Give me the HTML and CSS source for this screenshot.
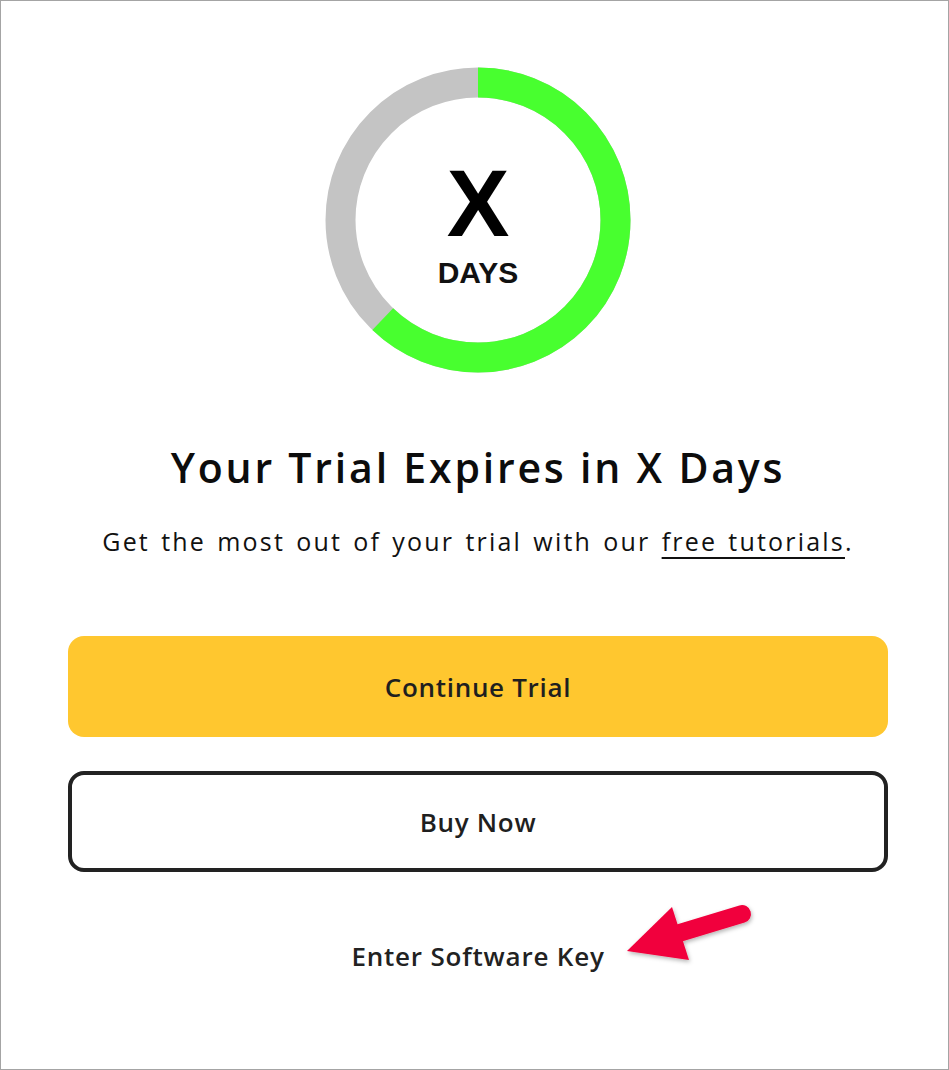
FILE: index.html
```html
<!DOCTYPE html>
<html lang="en">
<head>
<meta charset="utf-8">
<title>Trial</title>
<link rel="stylesheet" href="styles.css">
</head>
<body>
<div class="frame">
  <div class="ring">
    <svg class="ring-svg" width="306" height="306" viewBox="0 0 306 306">
      <circle cx="153" cy="153" r="137.5" fill="none" stroke="#c4c4c4" stroke-width="30"/>
      <circle cx="153" cy="153" r="137.5" fill="none" stroke="#48ff2f" stroke-width="30"
        stroke-dasharray="537 864" transform="rotate(-90 153 153)"/>
    </svg>
    <div class="ring-label">
      <div class="ring-x">X</div>
      <div class="ring-days">DAYS</div>
    </div>
  </div>
  <h1 class="title">Your Trial Expires in X Days</h1>
  <p class="sub">Get the most out of your trial with our <a class="link" href="#">free tutorials</a>.</p>
  <div class="actions">
    <button class="btn btn-primary">Continue Trial</button>
    <button class="btn btn-outline">Buy Now</button>
    <a class="key" href="#">Enter Software Key</a>
  </div>
  <svg class="arrow" width="140" height="80" viewBox="600 890 140 80">
    <defs>
      <filter id="sh" x="-20%" y="-20%" width="140%" height="150%">
        <feDropShadow dx="1" dy="2" stdDeviation="2" flood-color="#000" flood-opacity="0.3"/>
      </filter>
    </defs>
    <g filter="url(#sh)" fill="#f1003c">
      <line x1="742" y1="914" x2="676" y2="934" stroke="#f1003c" stroke-width="18" stroke-linecap="round"/>
      <polygon points="627,951 672,907 689,960"/>
    </g>
  </svg>
</div>
</body>
</html>
```
FILE: styles.css
```css
* { box-sizing: border-box; }
html, body { margin: 0; padding: 0; background: #fff; }
body { font-family: "Open Sans", "Liberation Sans", sans-serif; color: #111; }
.frame {
  position: relative;
  width: 949px;
  height: 1070px;
  border: 1px solid #a4a4a4;
  display: flex;
  flex-direction: column;
  align-items: center;
  padding-top: 66px;
  padding-left: 7px;
}
.ring { position: relative; width: 306px; height: 306px; }
.ring-svg { display: block; }
.ring-label {
  position: absolute;
  inset: 0;
  display: flex;
  flex-direction: column;
  align-items: center;
  padding-top: 90px;
  font-family: "Liberation Sans", Arial, sans-serif;
}
.ring-x { font-size: 94px; font-weight: 700; line-height: 94px; color: #000; }
.ring-days { font-size: 30px; font-weight: 700; line-height: 30px; margin-top: 7px; color: #111; }
.title {
  margin: 69px 0 0;
  font-size: 41px;
  font-weight: 600;
  line-height: 50px;
  letter-spacing: 2.8px;
  color: #0c0c0c;
}
.sub {
  margin: 31px 0 0;
  font-size: 25px;
  line-height: 36px;
  letter-spacing: 2.2px;
  word-spacing: 2.5px;
  color: #111;
}
.link { color: #111; text-decoration: underline; text-underline-offset: 6px; text-decoration-thickness: 2px; }
.actions {
  width: 820px;
  margin-top: 77px;
  display: flex;
  flex-direction: column;
  align-items: center;
  gap: 34px;
}
.btn {
  width: 100%;
  height: 101px;
  border-radius: 16px;
  font-family: inherit;
  font-size: 26px;
  font-weight: 600;
  letter-spacing: 0.7px;
  color: #1f1f1f;
  cursor: pointer;
}
.btn-primary { background: #ffc72f; border: none; }
.btn-outline { background: #fff; border: 4px solid #222; }
.key {
  margin-top: 34px;
  font-size: 26px;
  font-weight: 600;
  line-height: 32px;
  letter-spacing: 0.8px;
  color: #222;
  text-decoration: none;
}
.arrow { position: absolute; left: 599px; top: 889px; overflow: visible; }
```
